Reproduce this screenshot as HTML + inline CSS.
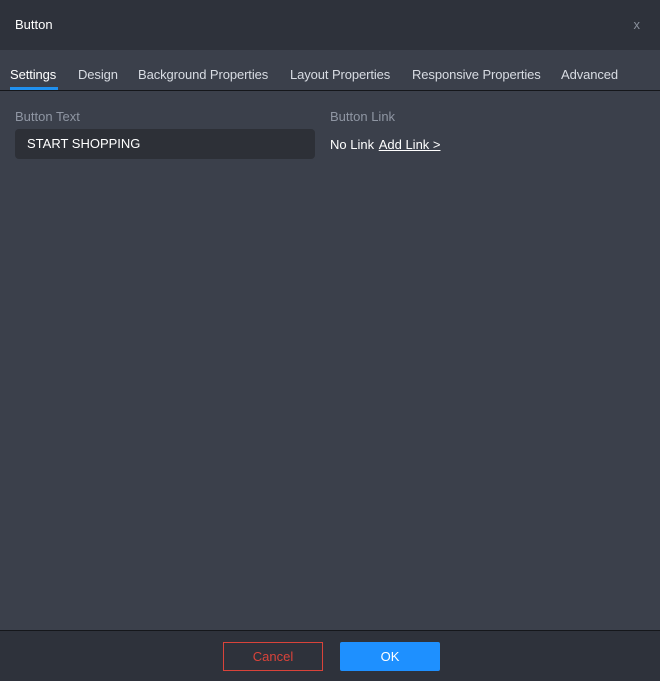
<!DOCTYPE html>
<html><head><style>
*{margin:0;padding:0;box-sizing:border-box}
body{width:660px;height:681px;background:#3b404b;font-family:"Liberation Sans",sans-serif;font-size:13px;position:relative;overflow:hidden}
.hdr{position:absolute;left:0;top:0;width:660px;height:50px;background:#2e323b;color:#fff}
.hdr .t{position:absolute;left:15px;top:17px;font-size:13px}
.hdr .x{position:absolute;right:20px;top:17px;color:#8a909c;font-size:13px}
.tabs{position:absolute;left:0;top:50px;width:660px;height:41px;border-bottom:1px solid #15171b}
.tab{position:absolute;top:17px;color:#d8dce3;font-size:13px;letter-spacing:-0.1px}
.tab.a{color:#fff}
.ul{position:absolute;left:10px;top:87px;width:48px;height:3px;background:#2090ee}
.lbl{position:absolute;top:109px;color:#8f96a3}
.inp{position:absolute;left:15px;top:129px;width:300px;height:30px;background:#2d3037;border-radius:4px;color:#fff;padding:7px 12px}
.lnk{position:absolute;left:330px;top:137px;color:#fff}
.lnk u{color:#fff;margin-left:1px}
.ftr{position:absolute;left:0;top:630px;width:660px;height:51px;background:#2e323b;border-top:1px solid #15171b}
.btn{position:absolute;top:11px;width:100px;height:29px;text-align:center;line-height:27px;font-size:13px}
</style></head><body>
<div class="hdr"><span class="t">Button</span><span class="x">x</span></div>
<div class="tabs">
<span class="tab a" style="left:10px">Settings</span>
<span class="tab" style="left:78px">Design</span>
<span class="tab" style="left:138px">Background Properties</span>
<span class="tab" style="left:290px">Layout Properties</span>
<span class="tab" style="left:412px">Responsive Properties</span>
<span class="tab" style="left:561px">Advanced</span>
</div>
<div class="ul"></div>
<span class="lbl" style="left:15px">Button Text</span>
<span class="lbl" style="left:330px">Button Link</span>
<div class="inp">START SHOPPING</div>
<div class="lnk">No Link <u>Add Link &gt;</u></div>
<div class="ftr">
<div class="btn" style="left:223px;border:1px solid #d9433a;color:#d9433a">Cancel</div>
<div class="btn" style="left:340px;background:#1e90ff;color:#fff;border-radius:2px;line-height:29px">OK</div>
</div>
</body></html>
